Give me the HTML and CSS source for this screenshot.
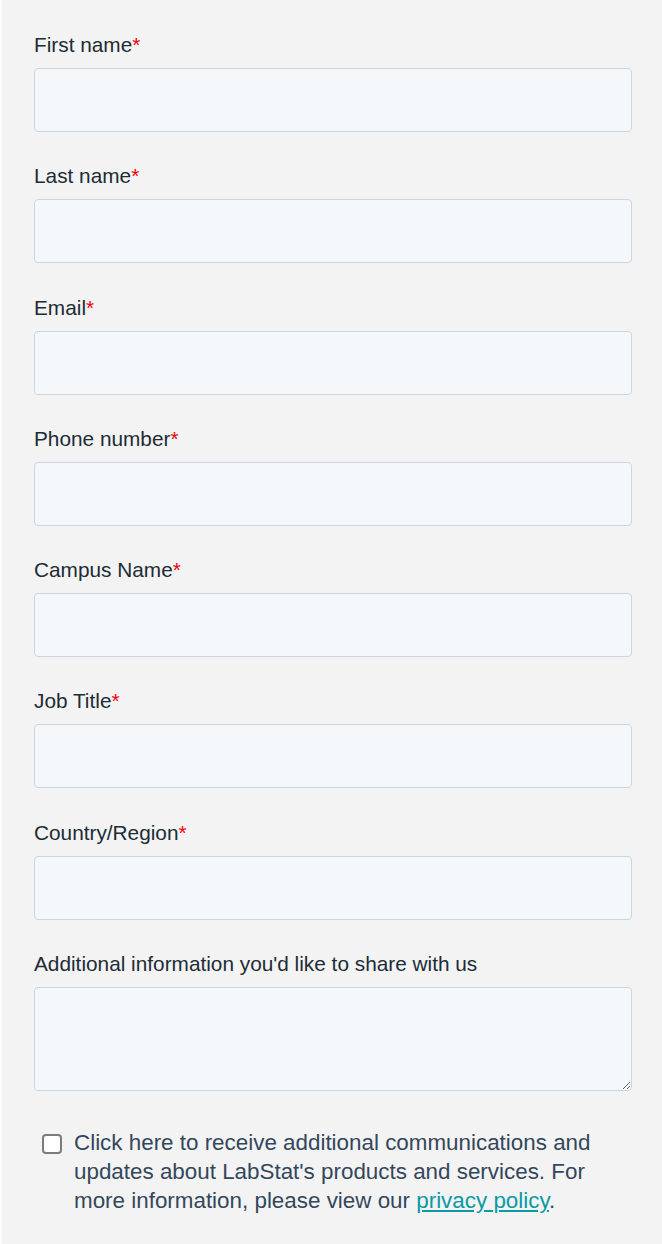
FILE: index.html
```html
<!DOCTYPE html>
<html>

<head>
    <meta charset="UTF-8">
    <meta name="viewport" content="width=device-width, initial-scale=1.0" />
    <title>Contact form</title>
    <link rel="stylesheet" href="styles.css">
</head>

<body>
    <form class="contactform" method="post" action="#">
        <div class="field">
            <label for="firstname">First name<span class="req">*</span></label>
            <input type="text" id="firstname" class="textinput" />
        </div>
        <div class="field">
            <label for="lastname">Last name<span class="req">*</span></label>
            <input type="text" id="lastname" class="textinput" />
        </div>
        <div class="field">
            <label for="email">Email<span class="req">*</span></label>
            <input type="email" id="email" class="textinput" />
        </div>
        <div class="field">
            <label for="phone">Phone number<span class="req">*</span></label>
            <input type="tel" id="phone" class="textinput" />
        </div>
        <div class="field">
            <label for="campus">Campus Name<span class="req">*</span></label>
            <input type="text" id="campus" class="textinput" />
        </div>
        <div class="field">
            <label for="jobtitle">Job Title<span class="req">*</span></label>
            <input type="text" id="jobtitle" class="textinput" />
        </div>
        <div class="field">
            <label for="country">Country/Region<span class="req">*</span></label>
            <input type="text" id="country" class="textinput" />
        </div>
        <div class="field">
            <label for="message">Additional information you'd like to share with us</label>
            <textarea id="message" class="textarea"></textarea>
        </div>
        <div class="consent">
            <input type="checkbox" id="optin" class="checkbox" />
            <label for="optin" class="consenttext">Click here to receive additional communications and updates about LabStat's products and services. For more information, please view our <a href="#" class="link">privacy policy</a>.</label>
        </div>
    </form>
</body>

</html>
```

FILE: styles.css
```css
html {
    background: #f3f3f3;
}

body {
    margin: 0;
    min-height: 1244px;
    border-left: 2px solid #fbfbfb;
    background: #f3f3f3;
    font-family: "Liberation Sans", Arial, Helvetica, sans-serif;
    font-size: 20.8px;
}

.contactform {
    padding: 33px 30px 0 32px;
}

.field {
    margin-bottom: 32.3px;
}

.field label {
    display: block;
    line-height: 24px;
    margin-bottom: 11px;
    color: #212b36;
}

.req {
    color: #f2000a;
}

.textinput,
.textarea {
    display: block;
    box-sizing: border-box;
    width: 100%;
    border: 1px solid #cbd6e2;
    border-radius: 4px;
    background: #f5f8fa;
    font-family: inherit;
    font-size: 18px;
    color: #33475b;
    margin: 0;
}

.textinput {
    height: 64px;
    padding: 0 14px;
}

.textarea {
    height: 104px;
    padding: 12px 14px;
    resize: vertical;
}

.consent {
    display: flex;
    align-items: flex-start;
    margin-top: 37px;
    padding-left: 8px;
}

.checkbox {
    flex: none;
    width: 20px;
    height: 20px;
    margin: 6px 12px 0 0;
    appearance: none;
    border: 2px solid #7c7c7c;
    border-radius: 4px;
    background: #fff;
}

.consenttext {
    font-size: 22.4px;
    line-height: 29px;
    color: #33475b;
}

.link {
    color: #0b9aa3;
}
```
